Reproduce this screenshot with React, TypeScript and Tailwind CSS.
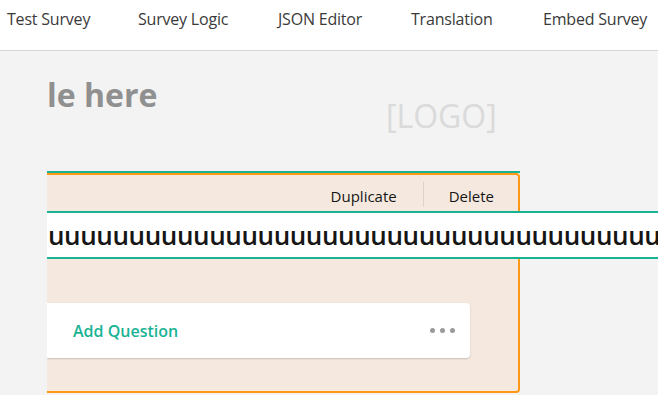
import React from "react";

const navItems: { label: string; w: string }[] = [
  { label: "Test Survey", w: "w-[131px]" },
  { label: "Survey Logic", w: "w-[140px]" },
  { label: "JSON Editor", w: "w-[133px]" },
  { label: "Translation", w: "w-[132px]" },
  { label: "Embed Survey", w: "w-[120px]" },
];

export default function App() {
  const us = "u".repeat(60);
  return (
    <div
      className="w-[658px] h-[395px] overflow-hidden bg-[#f3f3f3] flex flex-col"
      style={{ fontFamily: '"Open Sans", sans-serif' }}
    >
      {/* Top navigation */}
      <div className="h-[51px] shrink-0 bg-white border-b border-[#d6d6d6] flex items-start pl-[7px] pt-[8px]">
        {navItems.map((n) => (
          <div
            key={n.label}
            className={`${n.w} shrink-0 text-[16px] leading-[22px] text-[#3a3a3a] whitespace-nowrap tracking-[-0.2px]`}
          >
            {n.label}
          </div>
        ))}
      </div>

      {/* Design surface */}
      <div className="flex-1 flex min-h-0">
        <div className="w-[47px] shrink-0" />
        <div className="flex-1 overflow-hidden pt-[24px]">
          {/* Survey header row */}
          <div className="h-[96px] flex items-start">
            <div className="w-[339px] shrink-0 text-[32px] leading-[40px] font-bold text-[#909090] whitespace-nowrap">
              le here
            </div>
            <div className="mt-[21px] text-[32px] leading-[40px] text-[#dadada] whitespace-nowrap">
              [LOGO]
            </div>
          </div>

          {/* Page / panel card */}
          <div className="w-[473px] h-[2px] bg-[#19b394]" />
          <div className="w-[473px] h-[220px] bg-[#f5e9df] border-t-2 border-r-2 border-b-2 border-[#ff9814] rounded-r-[4px] flex flex-col">
            <div className="h-[36px] shrink-0 flex items-center justify-end text-[15px] text-[#161616]">
              <span className="px-[26px] pt-[6px] leading-[20px]">Duplicate</span>
              <span className="w-px h-[25px] mt-[2px] bg-[#dcd3cb]" />
              <span className="pl-[25px] pr-[24px] pt-[6px] leading-[20px]">Delete</span>
            </div>
            <div className="w-[640px] h-[48px] shrink-0 bg-white border-y-2 border-[#19b394] pl-[1px] overflow-hidden">
              <div className="text-[26px] leading-[44px] font-semibold text-[#161616] whitespace-nowrap tracking-[-0.4px]">
                {us}
              </div>
            </div>
            <div className="mt-[44px] w-[423px] h-[55px] bg-white rounded-r-[4px] shadow-[0_1px_2px_rgba(0,0,0,0.18)] flex items-center justify-between pl-[26px] pr-[15px]">
              <span className="text-[16px] font-semibold text-[#19b394] leading-[22px]">
                Add Question
              </span>
              <div className="flex items-center gap-[5px]">
                <span className="w-[5px] h-[5px] rounded-full bg-[#9a9a9a]" />
                <span className="w-[5px] h-[5px] rounded-full bg-[#9a9a9a]" />
                <span className="w-[5px] h-[5px] rounded-full bg-[#9a9a9a]" />
              </div>
            </div>
          </div>
        </div>
      </div>
    </div>
  );
}
